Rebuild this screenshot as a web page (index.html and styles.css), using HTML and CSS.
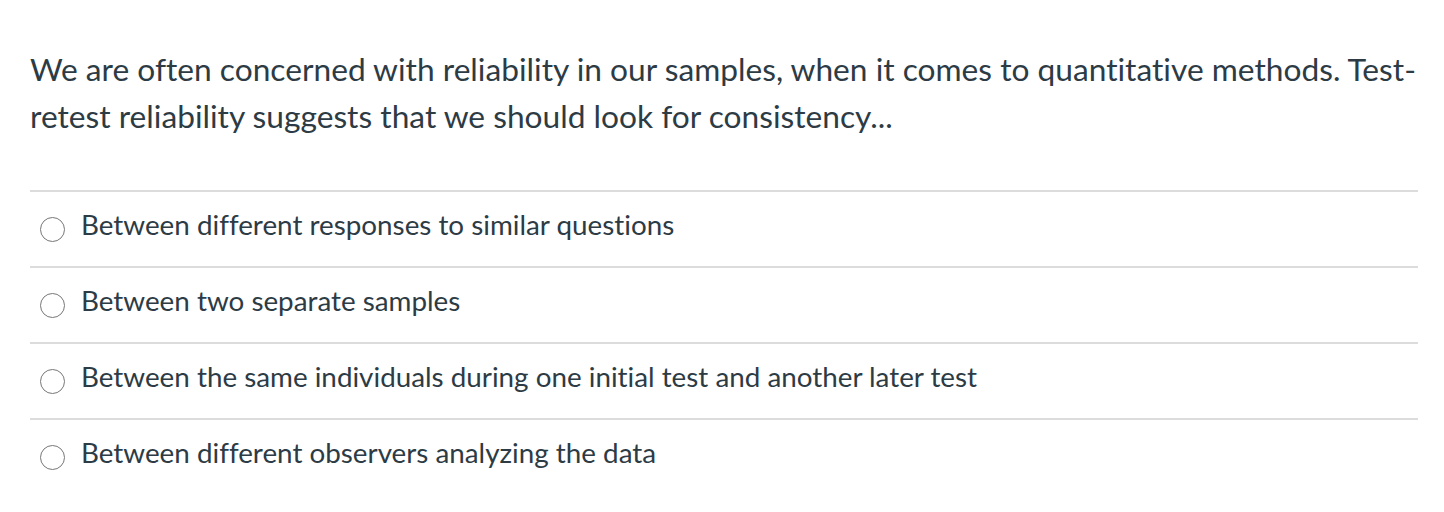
FILE: index.html
```html
<!DOCTYPE html>
<html>
<head>
<meta charset="utf-8">
<link rel="stylesheet" href="styles.css">
</head>
<body>
<div class="question">
  <p class="prompt">We are often concerned with reliability in our samples, when it comes to quantitative methods. Test-retest reliability suggests that we should look for consistency...</p>
  <div class="answers">
    <label class="answer"><span class="radio"></span><span class="text">Between different responses to similar questions</span></label>
    <label class="answer"><span class="radio"></span><span class="text">Between two separate samples</span></label>
    <label class="answer"><span class="radio"></span><span class="text">Between the same individuals during one initial test and another later test</span></label>
    <label class="answer"><span class="radio"></span><span class="text">Between different observers analyzing the data</span></label>
  </div>
</div>
</body>
</html>
```
FILE: styles.css
```css
html, body {
  margin: 0;
  padding: 0;
  background: #ffffff;
}
body {
  font-family: "Lato", "Noto Sans", sans-serif;
  color: #2d3b45;
  font-variant-ligatures: none;
  font-feature-settings: "liga" 0, "clig" 0;
}
.question {
  padding: 46px 26px 0 30px;
}
.prompt {
  margin: 0;
  font-size: 31.7px;
  line-height: 47px;
}
.answers {
  margin-top: 50px;
}
.answer {
  display: flex;
  align-items: flex-start;
  gap: 16px;
  height: 74px;
  box-sizing: content-box;
  border-top: 2px solid #dcdcdc;
  padding-left: 10px;
  font-size: 27.8px;
  line-height: 34px;
}
.answer .text {
  padding-top: 16px;
}
.radio {
  margin-top: 25px;
  width: 25px;
  height: 25px;
  border: 1.5px solid #777777;
  border-radius: 50%;
  box-sizing: border-box;
  flex: none;
}
```
